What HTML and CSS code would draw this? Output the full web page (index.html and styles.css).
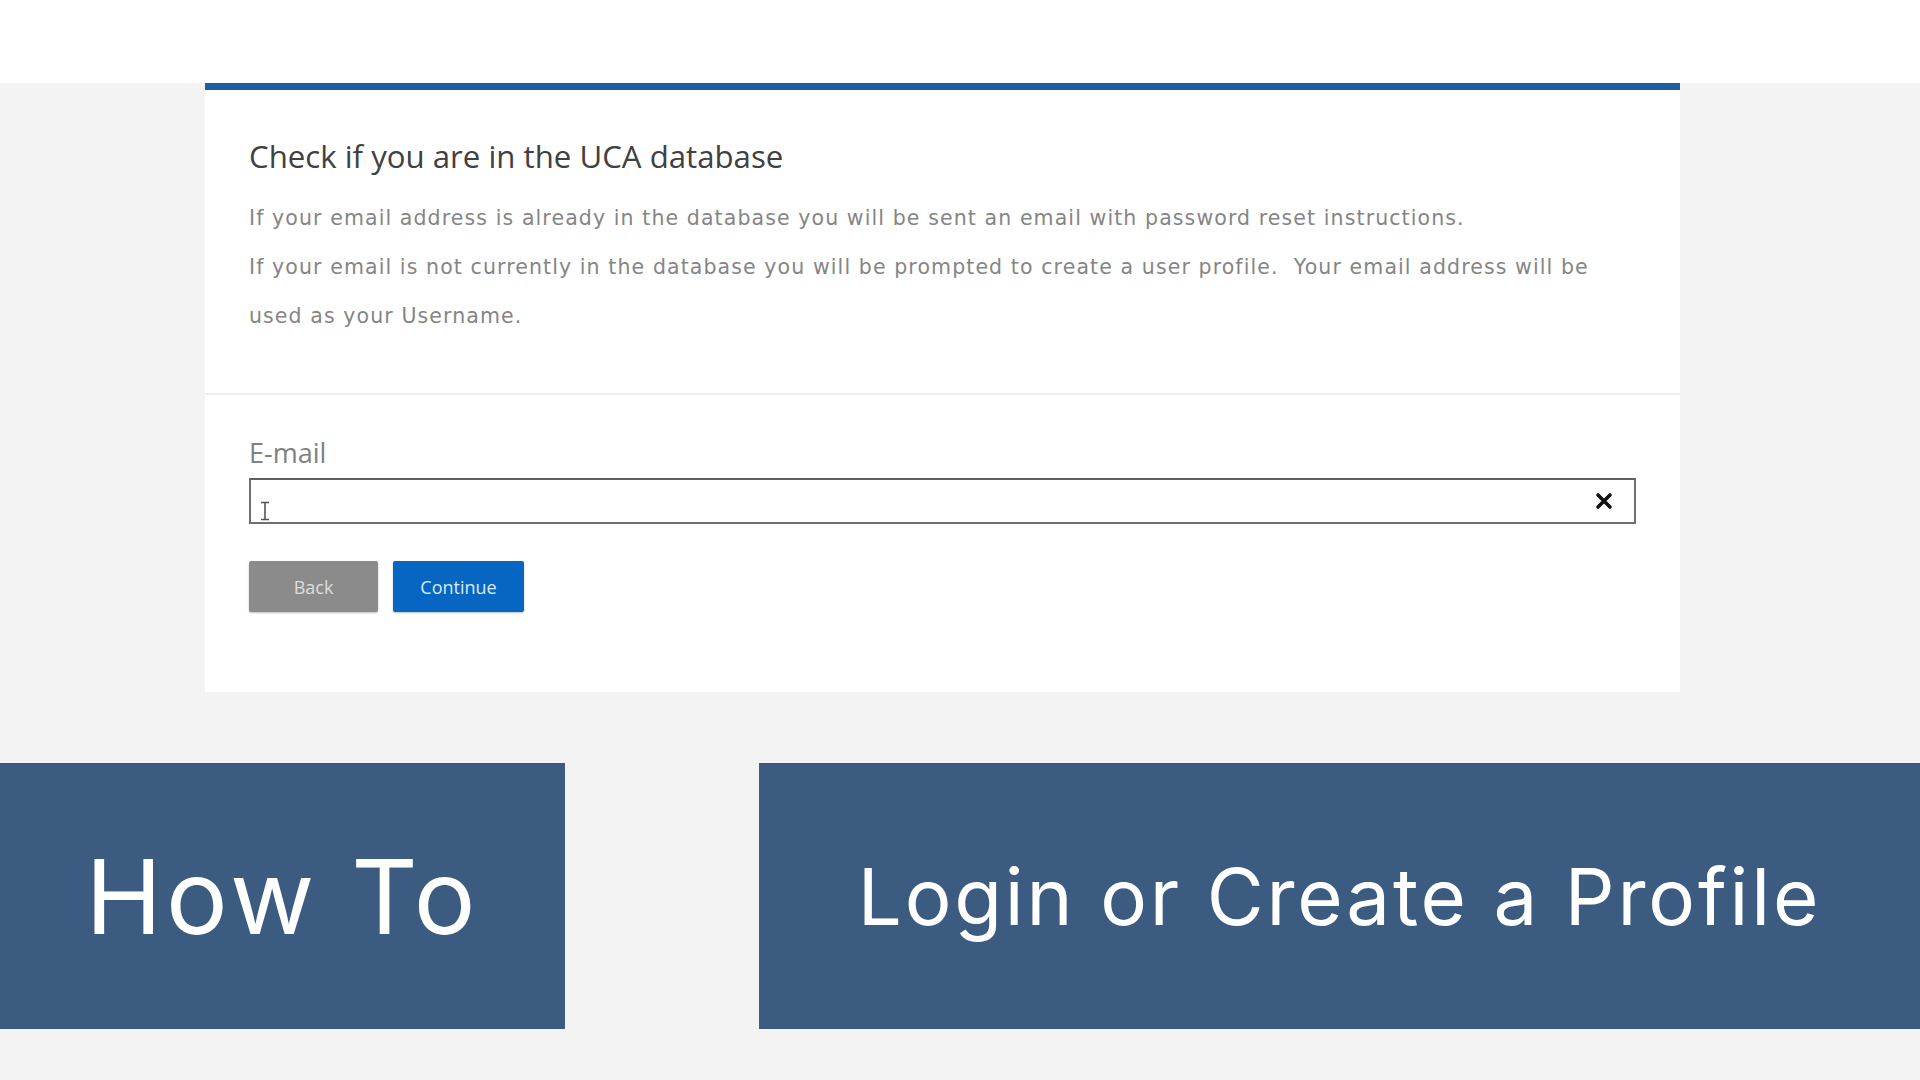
FILE: index.html
```html
<!DOCTYPE html>
<html lang="en">
<head>
<meta charset="utf-8">
<title>How To Login or Create a Profile</title>
<link rel="stylesheet" href="styles.css">
</head>
<body>
<div class="topband"></div>
<main class="stage">
  <section class="card">
    <div class="card-head">
      <h1 class="title">Check if you are in the UCA database</h1>
      <p class="desc">If your email address is already in the database you will be sent an email with password reset instructions.</p>
      <p class="desc">If your email is not currently in the database you will be prompted to create a user profile.&nbsp; Your email address will be used as your Username.</p>
    </div>
    <div class="card-body">
      <label class="label" for="email">E-mail</label>
      <div class="field">
        <span class="caret">
          <svg width="10" height="20" viewBox="0 0 10 20"><path d="M1 1.5h8M1 18.5h8M5 1.5v17" stroke="#555" stroke-width="1.6" fill="none"/></svg>
        </span>
        <input id="email" class="input" type="text" value="">
        <span class="clear">
          <svg width="18" height="18" viewBox="0 0 18 18"><path d="M3 3L15 15M15 3L3 15" stroke="#111" stroke-width="3.6" stroke-linecap="round"/></svg>
        </span>
      </div>
      <div class="actions">
        <button class="btn btn-back">Back</button>
        <button class="btn btn-continue">Continue</button>
      </div>
    </div>
  </section>
  <div class="banners">
    <div class="banner banner-left"><span>How To</span></div>
    <div class="banner banner-right"><span>Login or Create a Profile</span></div>
  </div>
</main>
</body>
</html>
```

FILE: styles.css
```css
html, body {
  margin: 0;
  padding: 0;
}
body {
  width: 1920px;
  height: 1080px;
  overflow: hidden;
  background: #f3f3f4;
  font-family: "Open Sans", "DejaVu Sans", sans-serif;
}
.topband {
  height: 83px;
  background: #ffffff;
}
.stage {
  display: flex;
  flex-direction: column;
}
.card {
  margin-left: 205px;
  width: 1475px;
  height: 609px;
  box-sizing: border-box;
  background: #ffffff;
  border-top: 7px solid #1c5fa5;
}
.card-head {
  padding: 46px 44px 0 44px;
  height: 305px;
  box-sizing: border-box;
  border-bottom: 2px solid #ececec;
}
.title {
  margin: 0 0 18px 0;
  font-family: "Open Sans", sans-serif;
  font-weight: 400;
  font-size: 31.2px;
  line-height: 40px;
  color: #414141;
}
.desc {
  margin: 0;
  font-family: "DejaVu Sans", "Verdana", sans-serif;
  font-size: 20.5px;
  letter-spacing: 1.1px;
  line-height: 49px;
  color: #858585;
  max-width: 1368px;
}
.card-body {
  padding: 41px 44px 0 44px;
  display: flex;
  flex-direction: column;
}
.label {
  font-family: "Open Sans", sans-serif;
  font-size: 27px;
  line-height: 34px;
  color: #808080;
  margin-bottom: 8px;
}
.field {
  position: relative;
  width: 1387px;
  height: 46px;
  box-sizing: border-box;
  border: 2px solid #707070;
  border-top-color: #5f5f5f;
  display: flex;
  align-items: center;
}
.input {
  flex: 1;
  height: 100%;
  border: 0;
  outline: 0;
  background: transparent;
  padding: 0 50px 0 12px;
  font-size: 18px;
}
.caret {
  position: absolute;
  left: 9px;
  top: 21px;
  line-height: 0;
}
.clear {
  position: absolute;
  right: 21px;
  top: 12px;
  line-height: 0;
}
.actions {
  display: flex;
  gap: 15px;
  margin-top: 37px;
}
.btn {
  height: 51px;
  border: 0;
  padding: 0;
  font-family: "Open Sans", sans-serif;
  font-size: 18px;
  box-shadow: 0 1px 2px rgba(0,0,0,0.25);
  border-radius: 2px;
}
.btn-back {
  width: 129px;
  background: #8b8b8b;
  color: #dedede;
}
.btn-continue {
  width: 131px;
  background: #0766c1;
  color: #d6ebff;
}
.banners {
  display: flex;
  margin-top: 71px;
  height: 266px;
}
.banner {
  background: #3c5b80;
  color: #ffffff;
  display: flex;
  align-items: center;
  justify-content: center;
  font-family: "Inter", "Lato", sans-serif;
  font-weight: 400;
}
.banner-left {
  width: 565px;
  font-size: 103px;
  letter-spacing: 4px;
}
.banner-right {
  margin-left: 194px;
  flex: 1;
  font-size: 78px;
  letter-spacing: 2.8px;
}
```
